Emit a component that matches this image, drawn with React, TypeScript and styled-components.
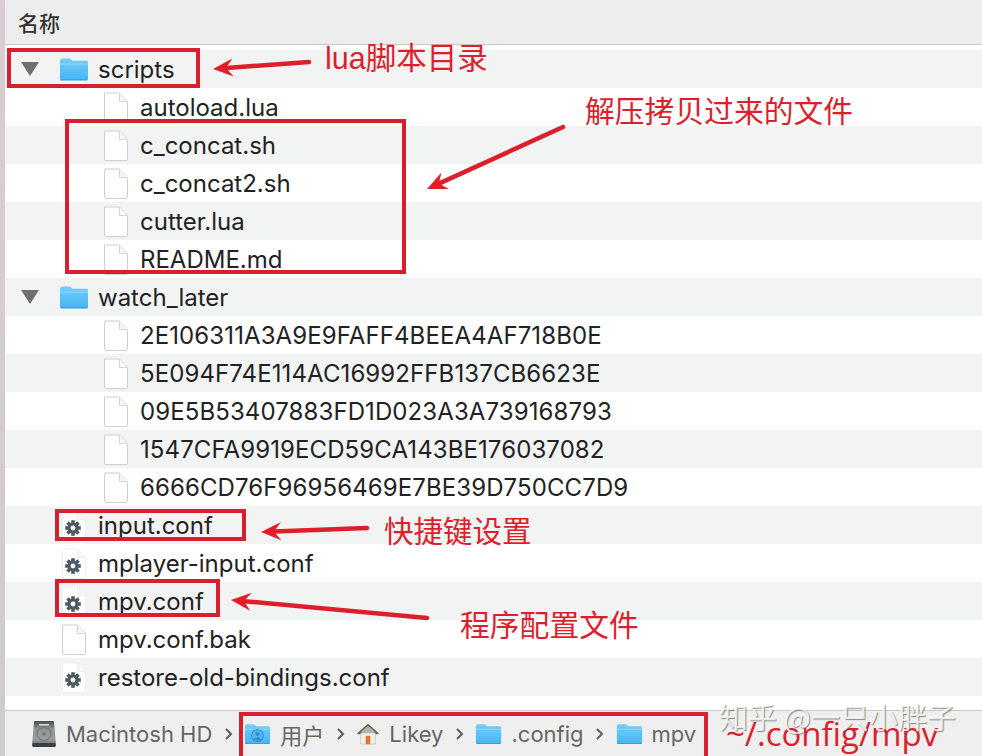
import React from "react";
import styled, { createGlobalStyle } from "styled-components";

const GlobalStyle = createGlobalStyle`
  html, body {
    margin: 0;
    padding: 0;
    background: #fff;
    font-family: "Inter", "Liberation Sans", "Noto Sans CJK SC", sans-serif;
  }
`;

type Kind = "folder" | "doc" | "conf";
interface Item {
  name: string;
  kind: Kind;
  level: number;
  hash?: boolean;
}

const items: Item[] = [
  { name: "scripts", kind: "folder", level: 0 },
  { name: "autoload.lua", kind: "doc", level: 1 },
  { name: "c_concat.sh", kind: "doc", level: 1 },
  { name: "c_concat2.sh", kind: "doc", level: 1 },
  { name: "cutter.lua", kind: "doc", level: 1 },
  { name: "README.md", kind: "doc", level: 1 },
  { name: "watch_later", kind: "folder", level: 0 },
  { name: "2E106311A3A9E9FAFF4BEEA4AF718B0E", kind: "doc", level: 1, hash: true },
  { name: "5E094F74E114AC16992FFB137CB6623E", kind: "doc", level: 1, hash: true },
  { name: "09E5B53407883FD1D023A3A739168793", kind: "doc", level: 1, hash: true },
  { name: "1547CFA9919ECD59CA143BE176037082", kind: "doc", level: 1, hash: true },
  { name: "6666CD76F96956469E7BE39D750CC7D9", kind: "doc", level: 1, hash: true },
  { name: "input.conf", kind: "conf", level: 0 },
  { name: "mplayer-input.conf", kind: "conf", level: 0 },
  { name: "mpv.conf", kind: "conf", level: 0 },
  { name: "mpv.conf.bak", kind: "doc", level: 0 },
  { name: "restore-old-bindings.conf", kind: "conf", level: 0 },
];

const boxes = [
  { x: 7, y: 48, w: 193, h: 40 },
  { x: 65, y: 119, w: 341, h: 155 },
  { x: 55, y: 509, w: 191, h: 32 },
  { x: 55, y: 579, w: 165, h: 38 },
  { x: 239, y: 712, w: 469, h: 60 },
];

function FolderIcon({ size = 30, user = false }: { size?: number; user?: boolean }) {
  const id = user ? "fu" : `f${size}`;
  return (
    <svg width={size} height={size * 0.81} viewBox="0 0 32 26">
      <defs>
        <linearGradient id={id} x1="0" y1="0" x2="0" y2="1">
          <stop offset="0" stopColor="#72cef9" />
          <stop offset="1" stopColor="#46b4f2" />
        </linearGradient>
      </defs>
      <path d="M1 5 Q1 1.5 3.5 1.5 H11 Q13 1.5 14 4 H29 Q31 4 31 6 V23 Q31 25 29 25 H3 Q1 25 1 23 Z" fill={`url(#${id})`} />
      <path d="M1 7.5 H31" stroke="#93ddfb" strokeWidth="1" />
      <path d="M1.5 24.5 H30.5" stroke="#2f9ad8" strokeWidth="1" />
      {user && (
        <g fill="#2f8fd0">
          <circle cx="16" cy="15" r="7" fill="#57b6ec" stroke="#2f8fd0" strokeWidth="1.2" />
          <circle cx="16" cy="13" r="2.4" />
          <path d="M11.5 19.5 Q16 14.5 20.5 19.5 Q16 22.5 11.5 19.5Z" />
        </g>
      )}
    </svg>
  );
}

function DocIcon({ gear }: { gear?: boolean }) {
  return (
    <svg width="26" height="31" viewBox="0 0 26 31">
      <path
        d="M1.5 1 H16.5 L24.5 9.5 V29.5 Q24.5 30.5 23 30.5 H3 Q1.5 30.5 1.5 29.5 Z"
        fill="#fff"
        stroke={gear ? "#f0f0f0" : "#cfcfcf"}
      />
      <path d="M16.5 1 V9.5 H24.5" fill="#f6f6f6" stroke={gear ? "#efefef" : "#d6d6d6"} />
      {gear && (
        <g transform="translate(12 18)" fill="#4e5a62">
          {[0, 45, 90, 135, 180, 225, 270, 315].map((a) => (
            <rect key={a} x="-1.8" y="-7.8" width="3.6" height="4" transform={`rotate(${a})`} />
          ))}
          <circle r="5.6" />
          <circle r="2.4" fill="#fff" />
        </g>
      )}
    </svg>
  );
}

function DiskIcon() {
  return (
    <svg width="26" height="28" viewBox="0 0 26 28">
      <defs>
        <linearGradient id="disk" x1="0" y1="0" x2="0" y2="1">
          <stop offset="0" stopColor="#4a4e4e" />
          <stop offset="0.3" stopColor="#8b9090" />
          <stop offset="0.7" stopColor="#9a9e9e" />
          <stop offset="1" stopColor="#595d5d" />
        </linearGradient>
      </defs>
      <path d="M3 2 Q3 1 4 1 H22 Q23 1 23 2 L25 25 Q25 27 23 27 H3 Q1 27 1 25 Z" fill="url(#disk)" />
      <rect x="8" y="4" width="10" height="1.6" fill="#d5d8d8" />
      <rect x="1.5" y="23" width="23" height="4" rx="1" fill="#3d4040" />
      <ellipse cx="13" cy="14" rx="7" ry="6.5" fill="none" stroke="#70757a" />
      <circle cx="13" cy="14" r="1.8" fill="#70757a" />
    </svg>
  );
}

function HomeIcon() {
  return (
    <svg width="24" height="25" viewBox="0 0 26 25">
      <path d="M5 12 H21 V24 H5 Z" fill="#f1efe9" stroke="#cfcabd" />
      <path d="M1 12.5 L13 2 L25 12.5 L22.5 13.5 L13 5.5 L3.5 13.5 Z" fill="#5f5f5c" />
      <path d="M6 10 L13 4.5 L20 10 V12 H6 Z" fill="#b8b3a6" />
      <rect x="10.5" y="15" width="5" height="9" fill="#e0762a" />
    </svg>
  );
}

function Chevron() {
  return (
    <Sep viewBox="0 0 9 14">
      <path d="M2 2 L7 7 L2 12" fill="none" stroke="#5e5e5e" strokeWidth="2" />
    </Sep>
  );
}

function Arrow({ from, to }: { from: [number, number]; to: [number, number] }) {
  const a = Math.atan2(to[1] - from[1], to[0] - from[0]);
  const ux = Math.cos(a);
  const uy = Math.sin(a);
  const bx = to[0] - ux * 20;
  const by = to[1] - uy * 20;
  const nx = to[0] - ux * 13;
  const ny = to[1] - uy * 13;
  const head = `${to[0]},${to[1]} ${bx - uy * 9},${by + ux * 9} ${nx},${ny} ${bx + uy * 9},${by - ux * 9}`;
  return (
    <>
      <line x1={from[0]} y1={from[1]} x2={nx} y2={ny} stroke="#dc1f2c" strokeWidth="4.5" strokeLinecap="round" />
      <polygon points={head} fill="#e31b2b" />
    </>
  );
}

export default function App() {
  return (
    <Page>
      <GlobalStyle />
      <Window>
        <ColumnHeader>名称</ColumnHeader>
        <List>
          {items.map((item) => (
            <Row key={item.name}>
              <Disclosure $show={item.kind === "folder"} />
              <IconCell $level={item.level}>
                {item.kind === "folder" ? <FolderIcon /> : <DocIcon gear={item.kind === "conf"} />}
              </IconCell>
              <Name $hash={item.hash}>{item.name}</Name>
            </Row>
          ))}
        </List>
        <PathBar>
          <Crumb>
            <DiskIcon />
            Macintosh HD
          </Crumb>
          <Chevron />
          <Crumb>
            <FolderIcon size={27} user />
            用户
          </Crumb>
          <Chevron />
          <Crumb>
            <HomeIcon />
            Likey
          </Crumb>
          <Chevron />
          <Crumb>
            <FolderIcon size={27} />
            .config
          </Crumb>
          <Chevron />
          <Crumb>
            <FolderIcon size={27} />
            mpv
          </Crumb>
        </PathBar>
      </Window>

      <Overlay>
        {boxes.map((b) => (
          <Box key={b.x + b.y} style={{ left: b.x, top: b.y, width: b.w, height: b.h }} />
        ))}
        <ArrowLayer viewBox="0 0 982 756">
          <Arrow from={[309, 62]} to={[213, 69]} />
          <Arrow from={[563, 127]} to={[427, 189]} />
          <Arrow from={[367, 528]} to={[261, 532]} />
          <Arrow from={[427, 618]} to={[231, 600]} />
        </ArrowLayer>
        <Label $x={325} $y={38} $size={30.5}>lua脚本目录</Label>
        <Label $x={585} $y={92} $size={29.8}>解压拷贝过来的文件</Label>
        <Label $x={384} $y={512} $size={29.5}>快捷键设置</Label>
        <Label $x={460} $y={606} $size={29.8}>程序配置文件</Label>
        <PathNote>~/.config/mpv</PathNote>
        <Watermark>知乎 @一只小胖子</Watermark>
      </Overlay>
    </Page>
  );
}

const Page = styled.div`
  position: relative;
  width: 982px;
  height: 756px;
  overflow: hidden;
  background: #fff;
`;

const Window = styled.div`
  display: flex;
  flex-direction: column;
  height: 756px;
  padding-left: 5px;
  box-sizing: border-box;
  background: linear-gradient(#dccbd4, #cdcdcd) no-repeat left top / 5px 100%, #fff;
`;

const ColumnHeader = styled.div`
  display: flex;
  align-items: center;
  height: 45px;
  padding-left: 13px;
  flex-shrink: 0;
  box-sizing: border-box;
  background: #ededed;
  border-bottom: 1px solid #c9c9c9;
  color: #333;
  font-size: 21px;
  font-weight: 500;
  font-family: "Noto Sans CJK SC", sans-serif;
`;

const List = styled.div`
  flex: 1;
  padding-top: 5px;
  background: #fff;
`;

const Row = styled.div`
  display: flex;
  align-items: center;
  height: 38px;
  background: #fff;

  &:nth-child(odd) {
    background: #f2f3f3;
  }
`;

const Disclosure = styled.span<{ $show: boolean }>`
  width: 0;
  height: 0;
  margin-left: 16px;
  border-style: solid;
  border-width: 14px 9px 0;
  border-color: ${(p) => (p.$show ? "#6f6f6f" : "transparent")} transparent transparent;
`;

const IconCell = styled.span<{ $level: number }>`
  display: flex;
  align-items: center;
  justify-content: center;
  width: 30px;
  margin-left: ${(p) => 20 + p.$level * 42}px;
`;

const Name = styled.span<{ $hash?: boolean }>`
  margin-left: 9px;
  color: #222;
  font-size: 24px;
  letter-spacing: ${(p) => (p.$hash ? "0.1px" : "0")};
  white-space: nowrap;
`;

const PathBar = styled.div`
  display: flex;
  align-items: center;
  gap: 11.5px;
  height: 46px;
  flex-shrink: 0;
  padding-left: 26px;
  box-sizing: border-box;
  background: #efefef;
  border-top: 1px solid #c9c9c9;
  color: #666;
  font-size: 22px;
`;

const Crumb = styled.span`
  display: flex;
  align-items: center;
  gap: 9px;
  white-space: nowrap;
`;

const Sep = styled.svg`
  width: 9px;
  height: 14px;
  flex-shrink: 0;
`;

const Overlay = styled.div`
  position: absolute;
  inset: 0;
  pointer-events: none;
`;

const Box = styled.div`
  position: absolute;
  box-sizing: border-box;
  border: 4px solid #d71f2d;
`;

const ArrowLayer = styled.svg`
  position: absolute;
  inset: 0;
  width: 982px;
  height: 756px;
`;

const Label = styled.div<{ $x: number; $y: number; $size: number }>`
  position: absolute;
  left: ${(p) => p.$x}px;
  top: ${(p) => p.$y}px;
  color: #dc1f2c;
  font-size: ${(p) => p.$size}px;
  line-height: 40px;
  white-space: nowrap;
  font-family: "Liberation Sans", "Noto Sans CJK SC", sans-serif;
`;

const PathNote = styled.div`
  position: absolute;
  left: 726px;
  top: 712px;
  color: #dc1f2c;
  font-size: 33px;
  line-height: 44px;
  white-space: nowrap;
  font-family: "Open Sans", sans-serif;
`;

const Watermark = styled.div`
  position: absolute;
  left: 719px;
  top: 698px;
  color: rgba(255, 255, 255, 0.8);
  font-size: 29px;
  line-height: 36px;
  white-space: nowrap;
  text-shadow: 1px 1px 1px rgba(90, 90, 90, 0.65);
  font-family: "Noto Sans CJK SC", sans-serif;
`;
